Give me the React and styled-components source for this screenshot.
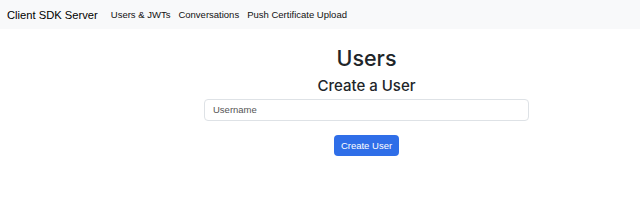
import React from "react";
import styled, { createGlobalStyle } from "styled-components";

const GlobalStyle = createGlobalStyle`
  body {
    margin: 0;
    background: #fff;
    font-family: "Liberation Sans", Arial, sans-serif;
    color: #212529;
  }
`;

const App = () => {
  return (
    <>
      <GlobalStyle />
      <Navbar>
        <Brand>Client SDK Server</Brand>
        <NavLinks>
          <NavLink>Users &amp; JWTs</NavLink>
          <NavLink>Conversations</NavLink>
          <NavLink>Push Certificate Upload</NavLink>
        </NavLinks>
      </Navbar>
      <Main>
        <Title>Users</Title>
        <Subtitle>Create a User</Subtitle>
        <Input placeholder="Username" />
        <Button>Create User</Button>
      </Main>
    </>
  );
};

export default App;

const Navbar = styled.nav`
  height: 29px;
  background-color: #f8f9fa;
  display: flex;
  align-items: center;
  padding: 0 7px;
`;

const Brand = styled.div`
  font-size: 11.2px;
  color: #000;
  margin-right: 13px;
`;

const NavLinks = styled.div`
  display: flex;
  gap: 8px;
`;

const NavLink = styled.a`
  font-size: 9.5px;
  color: #111;
`;

const Main = styled.div`
  width: 325px;
  margin-left: 204px;
  display: flex;
  flex-direction: column;
  align-items: center;
`;

const Title = styled.h1`
  margin: 17px 0 0;
  font-family: Inter, "Liberation Sans", sans-serif;
  font-size: 21.5px;
  font-weight: 500;
  line-height: 1.2;
`;

const Subtitle = styled.h2`
  margin: 5px 0 0;
  font-family: Inter, "Liberation Sans", sans-serif;
  font-size: 15px;
  font-weight: 500;
  line-height: 1.2;
`;

const Input = styled.input`
  box-sizing: border-box;
  width: 100%;
  height: 22px;
  margin-top: 4px;
  padding: 0 8px;
  border: 1px solid #dee2e6;
  border-radius: 4px;
  font-family: inherit;
  font-size: 9.5px;

  &::placeholder {
    color: #555;
  }
`;

const Button = styled.button`
  margin-top: 14px;
  height: 21px;
  padding: 0 7px;
  background-color: #2f6ee8;
  border: none;
  border-radius: 4px;
  color: #fff;
  font-family: inherit;
  font-size: 9.5px;
`;
